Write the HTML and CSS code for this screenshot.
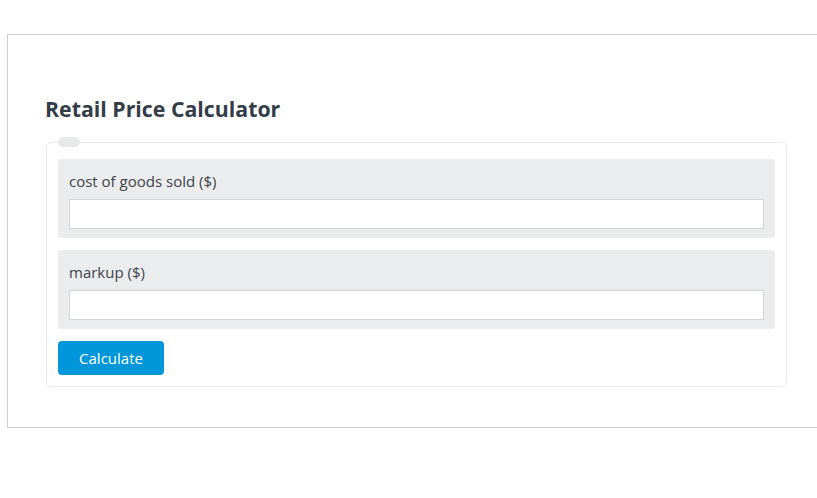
FILE: index.html
```html
<!DOCTYPE html>
<html lang="en">
<head>
<meta charset="utf-8">
<title>Retail Price Calculator</title>
<link rel="stylesheet" href="styles.css">
</head>
<body>
<div class="frame">
  <div class="content">
    <h2 class="title">Retail Price Calculator</h2>
    <fieldset class="calc">
      <legend class="calc-legend"></legend>
      <div class="field">
        <label class="field-label" for="cogs">cost of goods sold ($)</label>
        <input class="field-input" id="cogs" type="text">
      </div>
      <div class="field">
        <label class="field-label" for="markup">markup ($)</label>
        <input class="field-input" id="markup" type="text">
      </div>
      <button class="btn" type="button">Calculate</button>
    </fieldset>
  </div>
</div>
</body>
</html>
```

FILE: styles.css
```css
html, body {
  margin: 0;
  padding: 0;
  background: #fff;
}

body {
  font-family: "Open Sans", "Noto Sans", "Liberation Sans", sans-serif;
  color: #3c434a;
}

.frame {
  margin: 34px 0 0 7px;
  border: 1px solid #cfcfd1;
  border-right: 0;
  height: 394px;
  box-sizing: border-box;
}

.content {
  padding: 59px 30px 0 37px;
}

.title {
  margin: 0 0 13px 0;
  font-size: 21.3px;
  line-height: 30px;
  font-weight: 700;
  color: #333d47;
}

.calc {
  margin: 0 0 0 1px;
  border: 1px solid #ebebeb;
  border-radius: 5px;
  padding: 12px 11px 11px 11px;
  min-width: 0;
}

.calc-legend {
  display: block;
  width: 22px;
  height: 10px;
  padding: 0;
  background: #e8e9e9;
  border-radius: 5px;
}

.field {
  background: #ebeced;
  border-radius: 4px;
  padding: 11px 11px 9px 11px;
  margin-bottom: 12px;
}

.field-label {
  display: block;
  font-size: 15px;
  line-height: 22px;
  margin-bottom: 7px;
  color: #3c434a;
}

.field-input {
  display: block;
  box-sizing: border-box;
  width: 100%;
  height: 30px;
  margin: 0;
  border: 1px solid #d2d3d4;
  background: #fff;
  border-radius: 0;
  outline: none;
}

.btn {
  display: block;
  width: 106px;
  height: 34px;
  border: 0;
  border-radius: 4px;
  background: #0097da;
  color: #fff;
  font-family: "Open Sans", "Noto Sans", "Liberation Sans", sans-serif;
  font-size: 15px;
  padding: 0;
  cursor: pointer;
}
```
